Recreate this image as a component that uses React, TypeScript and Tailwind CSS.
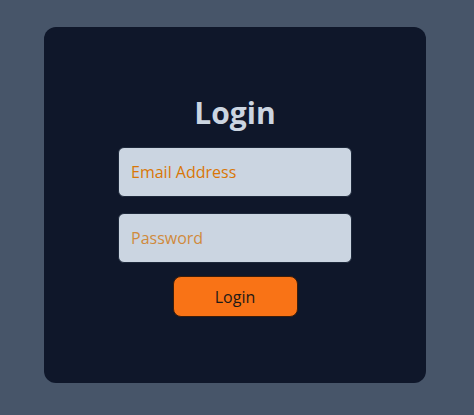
import { useState } from "react";

export default function App() {
  const [email, setEmail] = useState("");
  const [password, setPassword] = useState("");

  return (
    <div className="min-h-screen bg-[#475569] flex items-center justify-center pr-1 pb-[5px] font-['Open_Sans',sans-serif]">
      {/* Card */}
      <div className="w-[382px] h-[356px] bg-[#0f172a] rounded-xl flex flex-col items-center justify-center pt-[2px]">
        <h1 className="text-[30px] leading-9 font-bold text-[#cbd5e1] mb-4">Login</h1>
        <form className="flex flex-col items-center" onSubmit={(e) => e.preventDefault()}>
          <input
            type="email"
            value={email}
            onChange={(e) => setEmail(e.target.value)}
            placeholder="Email Address"
            className="w-[234px] h-[50px] bg-[#cbd5e1] border border-[#1e293b] rounded-md px-3 text-base text-slate-900 placeholder:text-[#d97706] outline-none mb-4"
          />
          <input
            type="password"
            value={password}
            onChange={(e) => setPassword(e.target.value)}
            placeholder="Password"
            className="w-[234px] h-[50px] bg-[#cbd5e1] border border-[#1e293b] rounded-md px-3 text-base text-slate-900 placeholder:text-[#d08a3c] outline-none mb-[13px]"
          />
          <button
            type="submit"
            className="w-[125px] h-[41px] bg-[#f97316] border border-[#3b1d0a] rounded-lg text-base text-[#1f1a17] flex items-center justify-center"
          >
            Login
          </button>
        </form>
      </div>
    </div>
  );
}
